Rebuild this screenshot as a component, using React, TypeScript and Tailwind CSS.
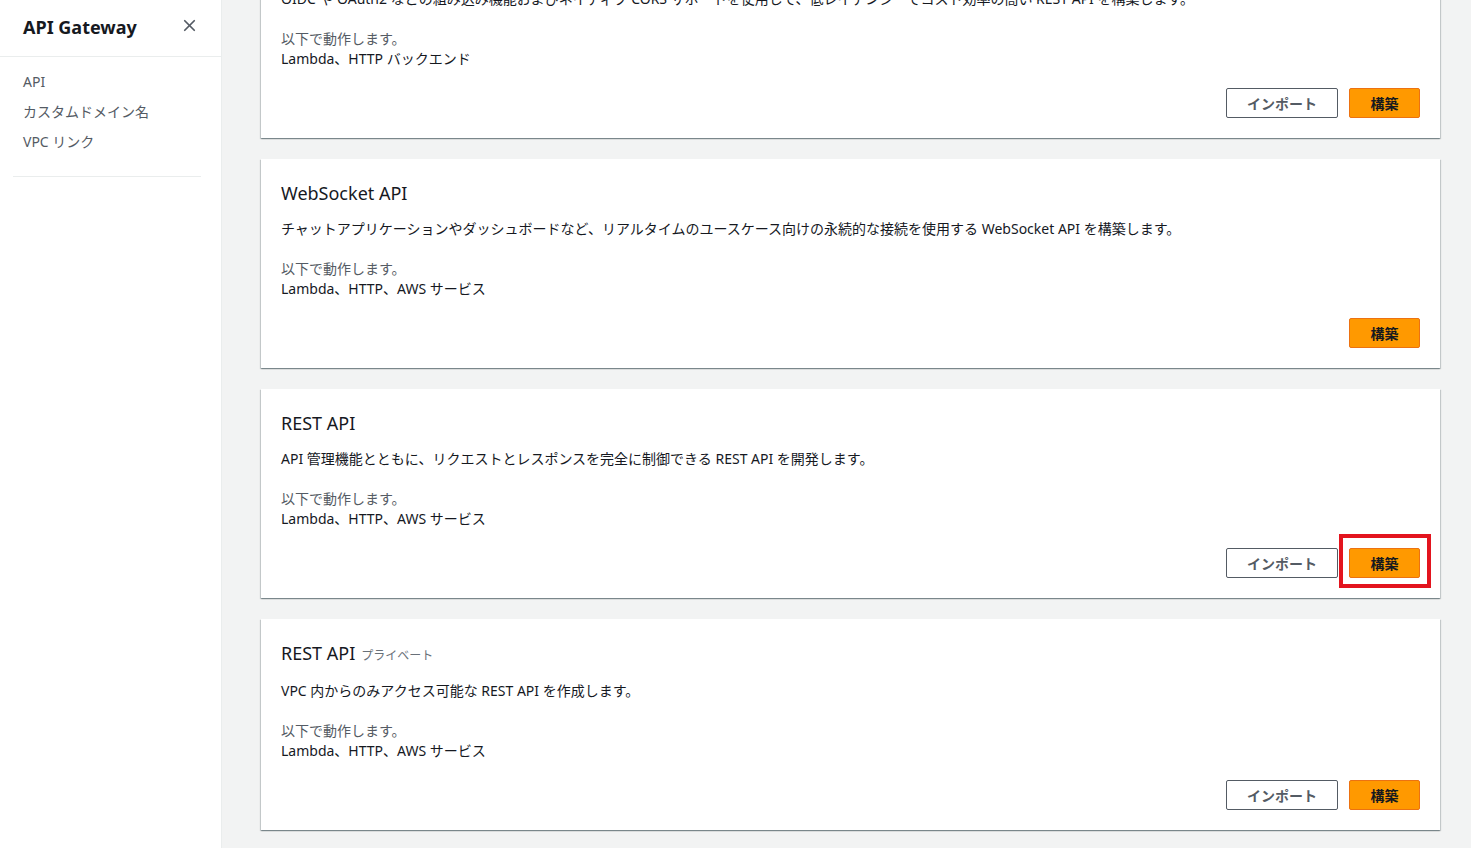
import { X } from 'lucide-react'

const font = { fontFamily: '"Noto Sans", "Noto Sans CJK JP", sans-serif' }

interface ApiCardProps {
  title: string
  badge?: string
  description: string
  worksWith: string
  canImport?: boolean
  highlightBuild?: boolean
}

function ApiCard({ title, badge, description, worksWith, canImport, highlightBuild }: ApiCardProps) {
  return (
    <div className="bg-white px-5 pt-[21px] pb-5 shadow-[0_1px_1px_0_rgba(0,28,36,0.3),1px_1px_1px_0_rgba(0,28,36,0.15),-1px_1px_1px_0_rgba(0,28,36,0.15)]">
      <div className="flex items-baseline gap-1.5 h-[26px]">
        <h2 className="text-[18px] leading-[26px] text-[#16191f]">{title}</h2>
        {badge && <span className="text-[12px] text-[#687078]">{badge}</span>}
      </div>
      <p className={`${badge ? 'mt-[15px]' : 'mt-[13px]'} text-[14px] leading-5 text-[#16191f]`}>{description}</p>
      <div className="mt-5 text-[14px] leading-5">
        <p className="text-[#545b64]">以下で動作します。</p>
        <p className="text-[#16191f]">{worksWith}</p>
      </div>
      <div className="mt-[19px] flex justify-end gap-[11px]">
        {canImport && (
          <button className="h-[30px] w-[112px] rounded-[2px] border border-[#545b64] bg-white text-[14px] font-bold text-[#545b64]">
            インポート
          </button>
        )}
        <div className="relative">
          <button className="h-[30px] w-[71px] rounded-[2px] border border-[#ec7211] bg-[#ff9900] text-[14px] font-bold text-[#16191f]">
            構築
          </button>
          {highlightBuild && (
            <div className="pointer-events-none absolute -left-[10px] -top-[14px] h-[54px] w-[92px] border-[4px] border-[#e3141e]" />
          )}
        </div>
      </div>
    </div>
  )
}

export default function App() {
  return (
    <div className="flex h-[848px] overflow-hidden bg-[#f2f3f3]" style={font}>
      <aside className="w-[222px] shrink-0 border-r border-[#eaeded] bg-white">
        <div className="flex h-[57px] items-center justify-between border-b border-[#eaeded] pl-[23px] pr-[22px]">
          <span className="-mt-[2px] text-[18px] font-bold text-[#16191f]">API Gateway</span>
          <X className="-mt-[5px] h-[19px] w-[19px] text-[#545b64]" strokeWidth={2.2} />
        </div>
        <nav className="px-[23px] pt-[10px] text-[14px] leading-[30px] text-[#545b64]">
          <div>API</div>
          <div>カスタムドメイン名</div>
          <div>VPC リンク</div>
        </nav>
        <div className="ml-[13px] mr-[20px] mt-[19px] border-b border-[#eaeded]" />
      </aside>
      <main className="flex-1 pl-[39px] pr-[31px]">
        <div className="-mt-[71px] flex flex-col gap-[21px]">
          <ApiCard
            title="HTTP API"
            description="OIDC や OAuth2 などの組み込み機能およびネイティブ CORS サポートを使用して、低レイテンシーでコスト効率の高い REST API を構築します。"
            worksWith="Lambda、HTTP バックエンド"
            canImport
          />
          <ApiCard
            title="WebSocket API"
            description="チャットアプリケーションやダッシュボードなど、リアルタイムのユースケース向けの永続的な接続を使用する WebSocket API を構築します。"
            worksWith="Lambda、HTTP、AWS サービス"
          />
          <ApiCard
            title="REST API"
            description="API 管理機能とともに、リクエストとレスポンスを完全に制御できる REST API を開発します。"
            worksWith="Lambda、HTTP、AWS サービス"
            canImport
            highlightBuild
          />
          <ApiCard
            title="REST API"
            badge="プライベート"
            description="VPC 内からのみアクセス可能な REST API を作成します。"
            worksWith="Lambda、HTTP、AWS サービス"
            canImport
          />
        </div>
      </main>
    </div>
  )
}
